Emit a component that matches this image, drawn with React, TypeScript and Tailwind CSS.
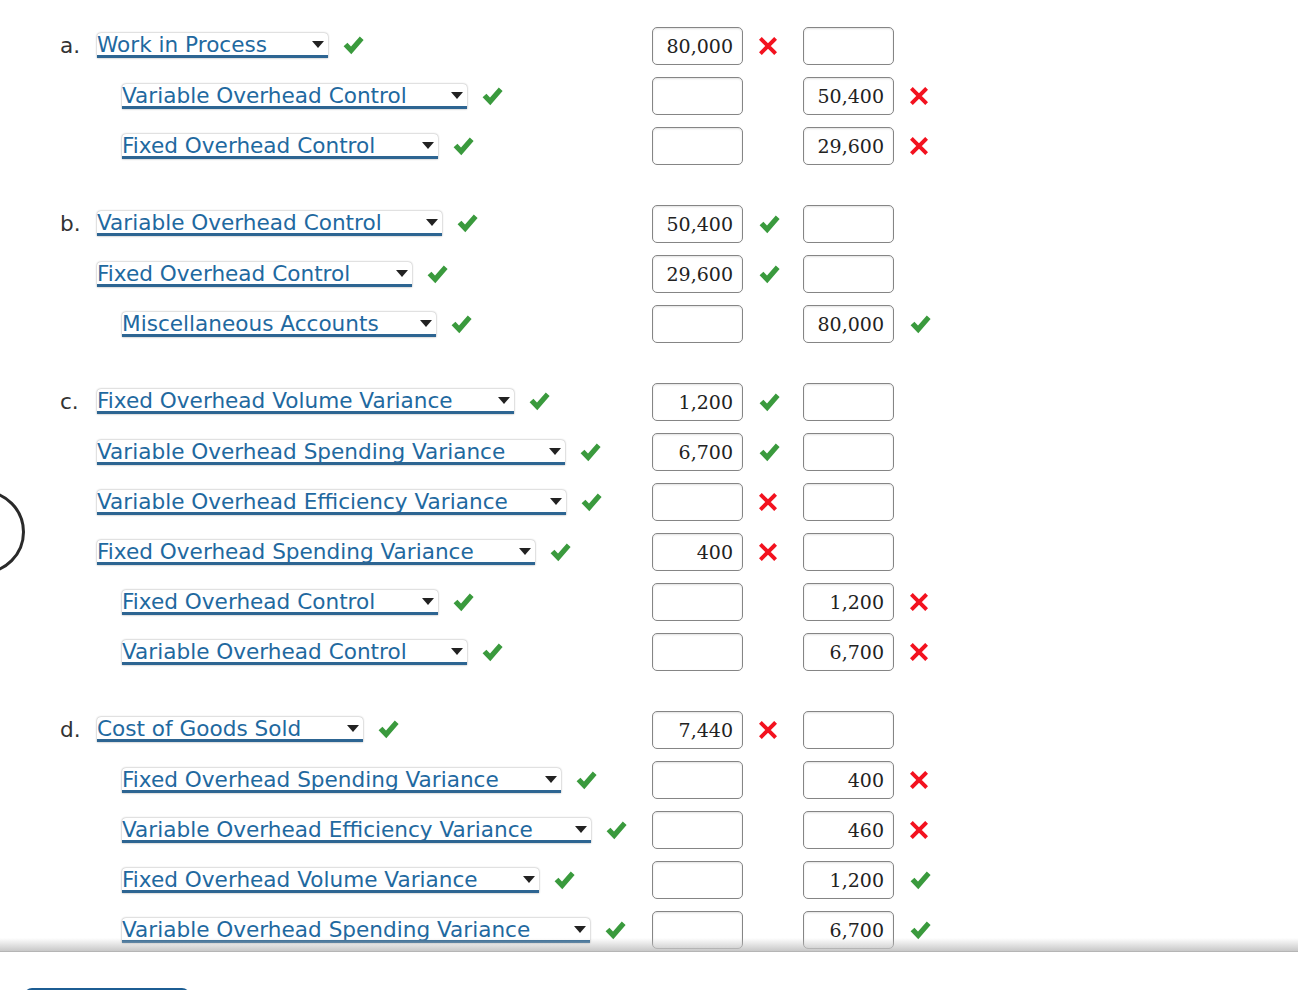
import React from "react";

type Mark = "check" | "x" | null;
type Row = {
  letter?: string;
  indent?: boolean;
  text: string;
  w: string;
  debit?: string;
  debitMark?: Mark;
  credit?: string;
  creditMark?: Mark;
};

const groups: Row[][] = [
  [
    { letter: "a.", text: "Work in Process", w: "w-[231px]", debit: "80,000", debitMark: "x" },
    { indent: true, text: "Variable Overhead Control", w: "w-[345px]", credit: "50,400", creditMark: "x" },
    { indent: true, text: "Fixed Overhead Control", w: "w-[316px]", credit: "29,600", creditMark: "x" },
  ],
  [
    { letter: "b.", text: "Variable Overhead Control", w: "w-[345px]", debit: "50,400", debitMark: "check" },
    { text: "Fixed Overhead Control", w: "w-[315px]", debit: "29,600", debitMark: "check" },
    { indent: true, text: "Miscellaneous Accounts", w: "w-[314px]", credit: "80,000", creditMark: "check" },
  ],
  [
    { letter: "c.", text: "Fixed Overhead Volume Variance", w: "w-[417px]", debit: "1,200", debitMark: "check" },
    { text: "Variable Overhead Spending Variance", w: "w-[468px]", debit: "6,700", debitMark: "check" },
    { text: "Variable Overhead Efficiency Variance", w: "w-[469px]", debit: "", debitMark: "x" },
    { text: "Fixed Overhead Spending Variance", w: "w-[438px]", debit: "400", debitMark: "x" },
    { indent: true, text: "Fixed Overhead Control", w: "w-[316px]", credit: "1,200", creditMark: "x" },
    { indent: true, text: "Variable Overhead Control", w: "w-[345px]", credit: "6,700", creditMark: "x" },
  ],
  [
    { letter: "d.", text: "Cost of Goods Sold", w: "w-[266px]", debit: "7,440", debitMark: "x" },
    { indent: true, text: "Fixed Overhead Spending Variance", w: "w-[439px]", credit: "400", creditMark: "x" },
    { indent: true, text: "Variable Overhead Efficiency Variance", w: "w-[469px]", credit: "460", creditMark: "x" },
    { indent: true, text: "Fixed Overhead Volume Variance", w: "w-[417px]", credit: "1,200", creditMark: "check" },
    { indent: true, text: "Variable Overhead Spending Variance", w: "w-[468px]", credit: "6,700", creditMark: "check" },
  ],
];

function Check() {
  return (
    <svg width="21" height="19" viewBox="0 0 21 19" className="block">
      <path d="M0.6 10.2 L4.4 6.8 L8 10.6 L16.8 0.6 L20.6 3.9 L8.3 18.2 Z" fill="#3a9a3d" />
    </svg>
  );
}

function XMark() {
  return (
    <svg width="18" height="18" viewBox="0 0 18 18" className="block">
      <path d="M2.8 2.8 L15.2 15.2 M15.2 2.8 L2.8 15.2" stroke="#f3121f" strokeWidth="4" strokeLinecap="square" fill="none" />
    </svg>
  );
}

function MarkIcon({ m }: { m?: Mark }) {
  if (m === "check") return <Check />;
  if (m === "x") return <XMark />;
  return null;
}

function Select({ text, w }: { text: string; w: string }) {
  return (
    <div
      className={`relative ${w} h-[25px] bg-white rounded-t-[4px] shadow-[0_0_2px_rgba(0,0,0,0.45)] border-b-[3px] border-[#2d6592] text-[21.6px] leading-[23px] text-[#1f69a0] whitespace-nowrap overflow-hidden`}
      style={{ fontFamily: '"DejaVu Sans", Verdana, sans-serif' }}
    >
      {text}
      <span className="absolute right-[4px] top-[8px] w-0 h-0 border-l-[6px] border-r-[6px] border-t-[7px] border-l-transparent border-r-transparent border-t-[#222]" />
    </div>
  );
}

function NumInput({ value }: { value?: string }) {
  return (
    <div
      className="w-[91px] h-[38px] shrink-0 rounded-[5px] border border-[#858585] bg-white shadow-[inset_0_1px_2px_rgba(0,0,0,0.12)] flex items-center justify-end pr-[9px] text-[19px] text-[#222]"
      style={{ fontFamily: '"DejaVu Serif", "Liberation Serif", serif' }}
    >
      {value}
    </div>
  );
}

function RowView({ r }: { r: Row }) {
  return (
    <div className="flex items-center h-[50px]">
      <div className="w-[652px] shrink-0 flex items-center pl-[60px]">
        <span
          className="w-[37px] shrink-0 text-[21.6px] text-[#333]"
          style={{ fontFamily: '"DejaVu Sans", Verdana, sans-serif' }}
        >
          {r.letter ?? ""}
        </span>
        {r.indent && <span className="w-[25px] shrink-0" />}
        <Select text={r.text} w={r.w} />
        <span className="ml-[15px]">
          <Check />
        </span>
      </div>
      <NumInput value={r.debit} />
      <div className="w-[60px] shrink-0 pl-[16px]">
        <MarkIcon m={r.debitMark} />
      </div>
      <NumInput value={r.credit} />
      <div className="w-[60px] shrink-0 pl-[16px]">
        <MarkIcon m={r.creditMark} />
      </div>
    </div>
  );
}

export default function App() {
  return (
    <div className="w-[1298px] h-[990px] bg-white overflow-hidden relative">
      <div className="relative h-[952px] overflow-hidden pt-[21px]">
        {groups.map((g, gi) => (
          <div key={gi} className={gi > 0 ? "mt-[28px]" : ""}>
            {g.map((r, ri) => (
              <RowView key={ri} r={r} />
            ))}
          </div>
        ))}
        <div className="absolute left-0 right-0 bottom-0 h-[14px] bg-gradient-to-b from-[rgba(255,255,255,0)] to-[#c4c4c4]" />
        <div className="absolute left-0 right-0 bottom-0 h-[1px] bg-[#b5b5b5]" />
      </div>
      <div className="pl-[24px] pt-[36px]">
        <div className="w-[166px] h-[20px] bg-[#1c5d93] rounded-t-[8px]" />
      </div>
      <div className="absolute left-[-59px] top-[490px] w-[84px] h-[84px] rounded-full border-[3px] border-[#2a2a2a] bg-white" />
    </div>
  );
}
